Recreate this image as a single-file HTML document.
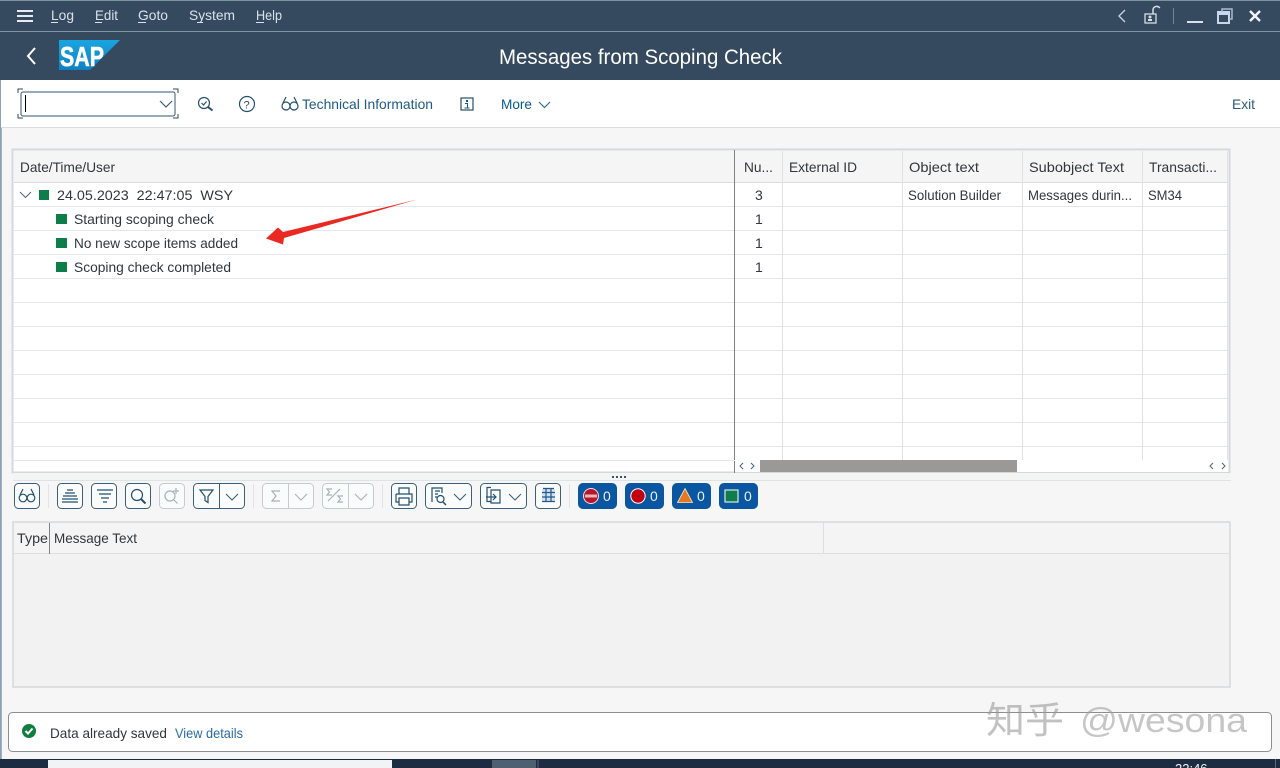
<!DOCTYPE html>
<html><head><meta charset="utf-8"><title>Messages from Scoping Check</title>
<style>
html,body{margin:0;padding:0;width:1280px;height:768px;overflow:hidden;background:#f6f6f6}
svg{display:block}
text{font-family:"Liberation Sans","Noto Sans CJK SC",sans-serif;font-size:14px;fill:#32363a}
.m{fill:#d9e2ea;font-size:14px}
.b{fill:#0a5a8e}
.ic{fill:none;stroke:#24506f;stroke-width:1.2}
.icg{fill:none;stroke:#a3b3bd;stroke-width:1.2}
.btn{fill:#fafbfb;stroke:#3c6078;stroke-width:1}
.bg{fill:#fafbfb;stroke:#c3ccd2;stroke-width:1}
.hl{stroke:#e4e6e7;stroke-width:1}
.vl{stroke:#e0e2e3;stroke-width:1}
</style></head><body>
<svg width="1280" height="768" viewBox="0 0 1280 768" xmlns="http://www.w3.org/2000/svg">
<rect width="1280" height="768" fill="#f6f6f6"/>
<!-- shell -->
<rect width="1280" height="80" fill="#354a5f"/>
<rect y="31" width="1280" height="1" fill="#8495a6"/>
<rect width="1280" height="1" fill="#8091a2"/>
<g fill="#e6ecf1"><rect x="17" y="10" width="16" height="2"/><rect x="17" y="15" width="16" height="2"/><rect x="17" y="20" width="16" height="2"/></g>
<text class="m" x="51" y="20" textLength="23" lengthAdjust="spacingAndGlyphs">Log</text>
<text class="m" x="95" y="20" textLength="23" lengthAdjust="spacingAndGlyphs">Edit</text>
<text class="m" x="138" y="20" textLength="30" lengthAdjust="spacingAndGlyphs">Goto</text>
<text class="m" x="189" y="20" textLength="46" lengthAdjust="spacingAndGlyphs">System</text>
<text class="m" x="256" y="20" textLength="26" lengthAdjust="spacingAndGlyphs">Help</text>
<g fill="#d9e2ea"><rect x="51" y="22" width="7" height="1"/><rect x="95" y="22" width="7" height="1"/><rect x="138" y="22" width="8" height="1"/><rect x="197" y="22" width="6" height="1"/><rect x="256" y="22" width="8" height="1"/></g>
<path d="M1125 10l-6 6 6 6" fill="none" stroke="#c5d0da" stroke-width="1.400"/>
<rect x="1145" y="14" width="11" height="9" fill="none" stroke="#d5dee6" stroke-width="1.300"/>
<path d="M1153 14v-4.500a3.800 3.800 0 0 1 6.800-1.500" fill="none" stroke="#d5dee6" stroke-width="1.500"/>
<circle cx="1150" cy="17" r="1.500" fill="#d5dee6"/><rect x="1148" y="19" width="4" height="2" fill="#d5dee6"/>
<rect x="1173" y="8" width="1" height="16" fill="#71859a"/>
<rect x="1187" y="21" width="16" height="2" fill="#d9e2ea"/>
<rect x="1218" y="12" width="11" height="11" fill="none" stroke="#c8d8e8" stroke-width="2"/>
<path d="M1222 12v-3h10v10h-3" fill="none" stroke="#a9bccd" stroke-width="1.500"/>
<rect x="1218" y="12" width="11" height="3" fill="#c8d8e8"/>
<path d="M1250 11l10 10M1260 11l-10 10" stroke="#f0f4f7" stroke-width="2.400"/>
<!-- title bar -->
<path d="M35 48l-7 8 7 8" fill="none" stroke="#fff" stroke-width="2"/>
<defs><linearGradient id="sap" x1="0" y1="0" x2="0" y2="1"><stop offset="0" stop-color="#1aa5e0"/><stop offset="1" stop-color="#0f80c4"/></linearGradient></defs>
<path d="M59 40h61l-30 30h-31z" fill="url(#sap)"/>
<text x="60" y="66" style="font-size:28px;font-weight:bold;fill:#fff;stroke:#fff;stroke-width:.6" textLength="44" lengthAdjust="spacingAndGlyphs">SAP</text>
<text x="499" y="64" style="font-size:21px;fill:#fff" textLength="283" lengthAdjust="spacingAndGlyphs">Messages from Scoping Check</text>
<!-- toolbar -->
<rect y="80" width="1280" height="47" fill="#fff"/>
<rect y="127" width="1280" height="1" fill="#d9dcde"/>
<rect x="0" y="80" width="1" height="679" fill="#8ea1b5"/>
<rect x="1" y="128" width="1" height="631" fill="#9eb0c2"/>
<rect x="21" y="92" width="154" height="24" rx="2" fill="#fff" stroke="#2f5870" stroke-width="1"/>
<path d="M18 93v-4h5M173 89h5v4M18 114v4h5M173 118h5v-4" fill="none" stroke="#3a4a55" stroke-width="1"/>
<rect x="25" y="95" width="1" height="17" fill="#000"/>
<path d="M160 101l6 6 6-6" fill="none" stroke="#3d6078" stroke-width="1.200"/>
<circle cx="204" cy="103" r="5.500" class="ic"/><path d="M208 107l4.500 3.500" stroke="#24506f" stroke-width="2"/><path d="M201.500 103l2 2 3-3.500" class="ic" stroke-width="1"/>
<circle cx="247" cy="104" r="7.500" class="ic"/>
<text x="243.500" y="108.500" style="font-size:11px;fill:#24506f">?</text>
<g class="ic"><circle cx="286" cy="106" r="4"/><circle cx="294" cy="106" r="4"/><path d="M283 103l3-6M297 103l-3-6"/></g>
<text x="302" y="109" style="fill:#1e5a86" textLength="131" lengthAdjust="spacingAndGlyphs">Technical Information</text>
<rect x="461" y="98" width="12" height="12" class="ic"/>
<rect x="466" y="100" width="2" height="2" fill="#24506f"/><path d="M465 103.500h2.500v4.500M464.500 108h5" fill="none" stroke="#24506f" stroke-width="1"/>
<text x="501" y="109" style="fill:#0a5a8e" textLength="31" lengthAdjust="spacingAndGlyphs">More</text>
<path d="M539 102l5.500 5.500 5.500-5.500" fill="none" stroke="#2f6f9a" stroke-width="1.200"/>
<text x="1232" y="109" style="fill:#2d5a80" textLength="23" lengthAdjust="spacingAndGlyphs">Exit</text>

<!-- upper table -->
<rect x="12.500" y="149.500" width="1217" height="323" fill="#fff" stroke="#d5d8da" stroke-width="2"/>
<rect x="14" y="151" width="1214" height="31" fill="#f5f5f5"/>
<rect x="14" y="182" width="1214" height="1" fill="#d9dbdc"/>
<g class="hl">
<path d="M14 206.500h1214M14 230.500h1214M14 254.500h1214M14 278.500h1214M14 302.500h1214M14 326.500h1214M14 350.500h1214M14 374.500h1214M14 398.500h1214M14 422.500h1214M14 446.500h1214"/>
</g>
<g class="vl"><path d="M782.500 151v309M902.500 151v309M1022.500 151v309M1142.500 151v309M1227.500 151v309"/></g>
<rect x="734" y="150" width="1" height="323" fill="#7d8285"/>
<rect x="14" y="460" width="1214" height="1" fill="#e4e6e7"/>
<rect x="735" y="460" width="493" height="12" fill="#fff"/>
<rect x="760" y="460" width="257" height="12" fill="#9b9997"/>
<g fill="none" stroke="#4a6478" stroke-width="1"><path d="M743 463l-3 3 3 3M751 463l3 3-3 3M1213 463l-3 3 3 3M1222 463l3 3-3 3"/></g>
<text x="20" y="172" textLength="95" lengthAdjust="spacingAndGlyphs">Date/Time/User</text>
<text x="744" y="172" textLength="29" lengthAdjust="spacingAndGlyphs">Nu...</text>
<text x="789" y="172" textLength="68" lengthAdjust="spacingAndGlyphs">External ID</text>
<text x="909" y="172" textLength="70" lengthAdjust="spacingAndGlyphs">Object text</text>
<text x="1029" y="172" textLength="95" lengthAdjust="spacingAndGlyphs">Subobject Text</text>
<text x="1149" y="172" textLength="68" lengthAdjust="spacingAndGlyphs">Transacti...</text>
<path d="M20 192l5.500 5.500 5.500-5.500" fill="none" stroke="#4c6a80" stroke-width="1"/>
<g fill="#0e7d4a"><rect x="39" y="190" width="10" height="10"/><rect x="56" y="214" width="11" height="10"/><rect x="56" y="238" width="11" height="10"/><rect x="56" y="262" width="11" height="10"/></g>
<text x="57" y="200" textLength="176" lengthAdjust="spacingAndGlyphs" xml:space="preserve">24.05.2023  22:47:05  WSY</text>
<text x="74" y="224" textLength="140" lengthAdjust="spacingAndGlyphs">Starting scoping check</text>
<text x="74" y="248" textLength="164" lengthAdjust="spacingAndGlyphs">No new scope items added</text>
<text x="74" y="272" textLength="157" lengthAdjust="spacingAndGlyphs">Scoping check completed</text>
<text x="755" y="200">3</text><text x="755" y="224">1</text><text x="755" y="248">1</text><text x="755" y="272">1</text>
<text x="908" y="200" textLength="93" lengthAdjust="spacingAndGlyphs">Solution Builder</text>
<text x="1028" y="200" textLength="104" lengthAdjust="spacingAndGlyphs">Messages durin...</text>
<text x="1148" y="200" textLength="34" lengthAdjust="spacingAndGlyphs">SM34</text>
<!-- arrow -->
<path d="M417 199.500L283 232L278 227.500L266 238.500L283 244.500L284 238Z" fill="#ea2a22"/>
<!-- splitter -->
<rect x="13" y="473" width="1217" height="8" fill="#f3f4f4"/>
<rect x="13" y="480" width="1218" height="1" fill="#e0e2e3"/>
<g fill="#3b5268"><rect x="612" y="476" width="2" height="2"/><rect x="616" y="476" width="2" height="2"/><rect x="620" y="476" width="2" height="2"/><rect x="624" y="476" width="2" height="2"/></g>
<!-- lower toolbar -->
<rect x="14.500" y="483.500" width="25" height="25" rx="4" class="btn"/>
<g class="ic"><circle cx="23" cy="498" r="3.800"/><circle cx="31" cy="498" r="3.800"/><path d="M20 495l3-6M34 495l-3-6"/></g>
<rect x="48" y="484" width="1" height="24" fill="#e1e4e6"/>
<rect x="57.500" y="483.500" width="25" height="25" rx="4" class="btn"/>
<path d="M67 490h6M65 493h10M63 496h14M62 499h16M62 502h16" class="ic" stroke-width="1"/>
<rect x="91.500" y="483.500" width="25" height="25" rx="4" class="btn"/>
<path d="M97 490h16M99 494h12M101 498h8M103 502h4" class="ic" stroke-width="1"/>
<rect x="125.500" y="483.500" width="25" height="25" rx="4" class="btn"/>
<circle cx="137" cy="495" r="5.500" class="ic"/><path d="M141 499l4.500 4.500" stroke="#24506f" stroke-width="2"/>
<rect x="159.500" y="483.500" width="25" height="25" rx="4" class="bg"/>
<circle cx="170" cy="496" r="5" class="icg"/><path d="M174 500l3.500 3.500M176 488v6M173 491h6" class="icg"/>
<rect x="193.500" y="483.500" width="51" height="25" rx="4" class="btn"/>
<path d="M219.500 484v24" stroke="#3c6078"/>
<path d="M200 490h13l-5 6.500v6l-3-2v-4z" class="ic"/>
<path d="M226 494l6 6 6-6" fill="none" stroke="#3c6078" stroke-width="1.100"/>
<rect x="253" y="484" width="1" height="24" fill="#e1e4e6"/>
<rect x="262.500" y="483.500" width="51" height="25" rx="4" class="bg"/>
<path d="M288.500 484v24" stroke="#c3ccd2"/>
<path d="M280 491h-8l4 5-4 5h8" class="icg" stroke-width="1"/>
<path d="M295 494l6 6 6-6" fill="none" stroke="#a3b3bd" stroke-width="1.100"/>
<rect x="322.500" y="483.500" width="51" height="25" rx="4" class="bg"/>
<path d="M348.500 484v24" stroke="#c3ccd2"/>
<path d="M332 489h-5l2.500 3-2.500 3h5M343 496h-5l2.500 3-2.500 3h5M328 501l12-12" class="icg" stroke-width="0.900"/>
<path d="M355 494l6 6 6-6" fill="none" stroke="#a3b3bd" stroke-width="1.100"/>
<rect x="382" y="484" width="1" height="24" fill="#e1e4e6"/>
<rect x="391.500" y="483.500" width="25" height="25" rx="4" class="btn"/>
<path d="M399 494v-6h10v6M396 494h16v8h-3M399 502h-3v-8M399 498h10v7h-10z" class="ic"/>
<rect x="425.500" y="483.500" width="46" height="25" rx="4" class="btn"/>
<path d="M432 502v-14h10v5M435 491h5M435 494h3M435 497h2" class="ic" stroke-width="1.100"/>
<circle cx="440.500" cy="499" r="3.500" class="ic"/><path d="M443 502l3 3" stroke="#24506f" stroke-width="1.500"/>
<path d="M454 494l6 6 6-6" fill="none" stroke="#3c6078" stroke-width="1.100"/>
<rect x="480.500" y="483.500" width="46" height="25" rx="4" class="btn"/>
<path d="M491 487.500h-4v14h4M491 490h9v13h-9zM486 497h10M493 494l3 3-3 3" class="ic" stroke-width="1.100"/>
<path d="M509 494l6 6 6-6" fill="none" stroke="#3c6078" stroke-width="1.100"/>
<rect x="535.500" y="483.500" width="25" height="25" rx="4" class="btn"/>
<rect x="542" y="489" width="13" height="13" fill="#8fb0d0" fill-opacity=".35"/>
<path d="M542 492.500h13M542 497h13M542 501.500h13M546 489v13M551 489v13M543 488.500h11" fill="none" stroke="#1f5a8a" stroke-width="1.200"/>
<rect x="569" y="484" width="1" height="24" fill="#e1e4e6"/>
<g>
<rect x="578" y="483" width="39" height="26" rx="5" fill="#0a56a0"/>
<rect x="625" y="483" width="39" height="26" rx="5" fill="#0a56a0"/>
<rect x="672" y="483" width="39" height="26" rx="5" fill="#0a56a0"/>
<rect x="719" y="483" width="39" height="26" rx="5" fill="#0a56a0"/>
<circle cx="591" cy="496" r="7.500" fill="#b8142a" stroke="#f0dfe0" stroke-width="1"/>
<rect x="585" y="494.500" width="12" height="3" fill="#e8b8b8"/>
<circle cx="638" cy="496" r="7.200" fill="#c00010" stroke="#fff" stroke-width="1"/>
<path d="M685 488.500l7.500 14h-15z" fill="#e5791e" stroke="#f6e6d6" stroke-width="0.800"/>
<rect x="725" y="490" width="13" height="12" fill="#0e7d4a" stroke="#d8e8e8" stroke-width="1.200"/>
<text x="603" y="501" style="fill:#e8f0f8">0</text><text x="650" y="501" style="fill:#e8f0f8">0</text><text x="697" y="501" style="fill:#e8f0f8">0</text><text x="744" y="501" style="fill:#e8f0f8">0</text>
</g>
<!-- lower table -->
<rect x="13" y="522" width="1217" height="165" fill="#f2f2f2" stroke="#d5d8da" stroke-width="1.500"/>
<rect x="14" y="523" width="1215" height="30" fill="#f4f4f4"/>
<rect x="14" y="553" width="1215" height="1" fill="#dcdedf"/>
<rect x="49" y="523" width="1" height="31" fill="#7d8285"/>
<rect x="823" y="523" width="1" height="30" fill="#dcdedf"/>
<text x="17" y="543" textLength="31" lengthAdjust="spacingAndGlyphs">Type</text>
<text x="54" y="543" textLength="83" lengthAdjust="spacingAndGlyphs">Message Text</text>
<!-- message bar -->
<rect x="8.500" y="712.500" width="1263" height="39" rx="4" fill="#fff" stroke="#8b8f92" stroke-width="1"/>
<circle cx="29" cy="731" r="7" fill="#107e3e"/>
<path d="M25.500 731l2.500 2.500 4.500-5" fill="none" stroke="#fff" stroke-width="2"/>
<text x="50" y="738" textLength="117" lengthAdjust="spacingAndGlyphs">Data already saved</text>
<text x="175" y="738" style="fill:#2a6aa5" textLength="68" lengthAdjust="spacingAndGlyphs">View details</text>
<!-- watermark -->
<text x="986" y="733" style="font-size:37px;fill:#9a9a9a;fill-opacity:.6" textLength="78" lengthAdjust="spacingAndGlyphs">知乎</text>
<text x="1080" y="732" style="font-size:34px;fill:#a0a0a0;fill-opacity:.6" textLength="167" lengthAdjust="spacingAndGlyphs">@wesona</text>
<!-- taskbar -->
<rect y="759" width="1280" height="9" fill="#1d2c40"/>
<rect x="48" y="760" width="344" height="8" fill="#f2f3f5"/>
<rect x="492" y="760" width="44" height="8" fill="#4f6170"/>
<rect x="537" y="760" width="2" height="8" fill="#39495a"/>
<rect x="1275" y="759" width="1" height="9" fill="#5d6a78"/>
<text x="1175" y="773" style="font-size:13px;fill:#f0f3f6">22:46</text>
</svg>
</body></html>
